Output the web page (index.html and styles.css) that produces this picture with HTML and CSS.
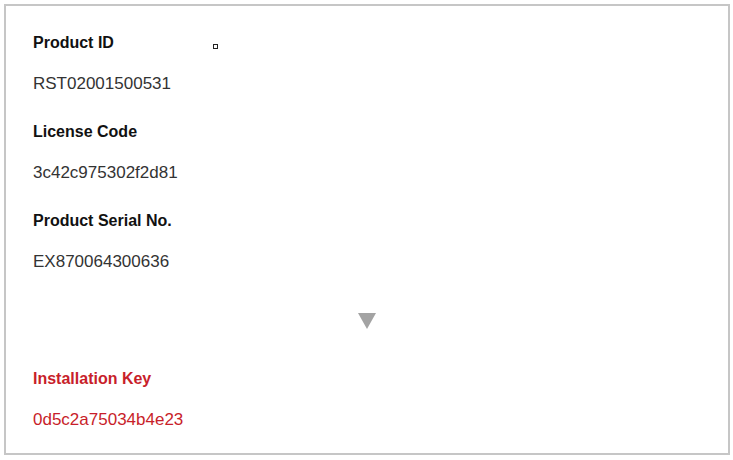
FILE: index.html
```html
<!DOCTYPE html>
<html>
<head>
<meta charset="utf-8">
<link rel="stylesheet" href="styles.css">
</head>
<body>
<div class="card">
  <div class="field">
    <div class="label">Product ID<span class="dot"></span></div>
    <div class="value">RST02001500531</div>
  </div>
  <div class="field">
    <div class="label">License Code</div>
    <div class="value">3c42c975302f2d81</div>
  </div>
  <div class="field">
    <div class="label">Product Serial No.</div>
    <div class="value">EX870064300636</div>
  </div>
  <div class="arrow-row">
    <svg class="arrow" width="18" height="16" viewBox="0 0 18 16"><polygon points="0,0 18,0 9,16" fill="#a3a3a3"/></svg>
  </div>
  <div class="field key">
    <div class="label">Installation Key</div>
    <div class="value">0d5c2a75034b4e23</div>
  </div>
</div>
</body>
</html>
```
FILE: styles.css
```css
html, body {
  margin: 0;
  padding: 0;
  background: #ffffff;
}
body {
  font-family: "Liberation Sans", Arial, sans-serif;
}
.card {
  margin: 4px 0 0 4px;
  width: 726px;
  height: 451px;
  border: 2px solid #c6c6c6;
  padding: 27px 0 0 27px;
  box-sizing: border-box;
  display: flex;
  flex-direction: column;
}
.field {
  display: flex;
  flex-direction: column;
  margin-bottom: 28px;
}
.label {
  font-size: 16px;
  font-weight: bold;
  line-height: 20px;
  color: #111111;
  display: flex;
  align-items: center;
}
.value {
  margin-top: 21px;
  font-size: 17px;
  line-height: 20px;
  color: #333333;
}
.dot {
  width: 3px;
  height: 3px;
  border: 1px solid #222;
  margin-left: 99px;
  margin-top: 7px;
}
.arrow-row {
  display: flex;
  justify-content: center;
  margin-top: 13px;
  margin-bottom: 40px;
  padding-right: 27px;
}
.arrow {
  display: block;
}
.key .label {
  color: #c81e2a;
}
.key .value {
  color: #c81e2a;
}
```
